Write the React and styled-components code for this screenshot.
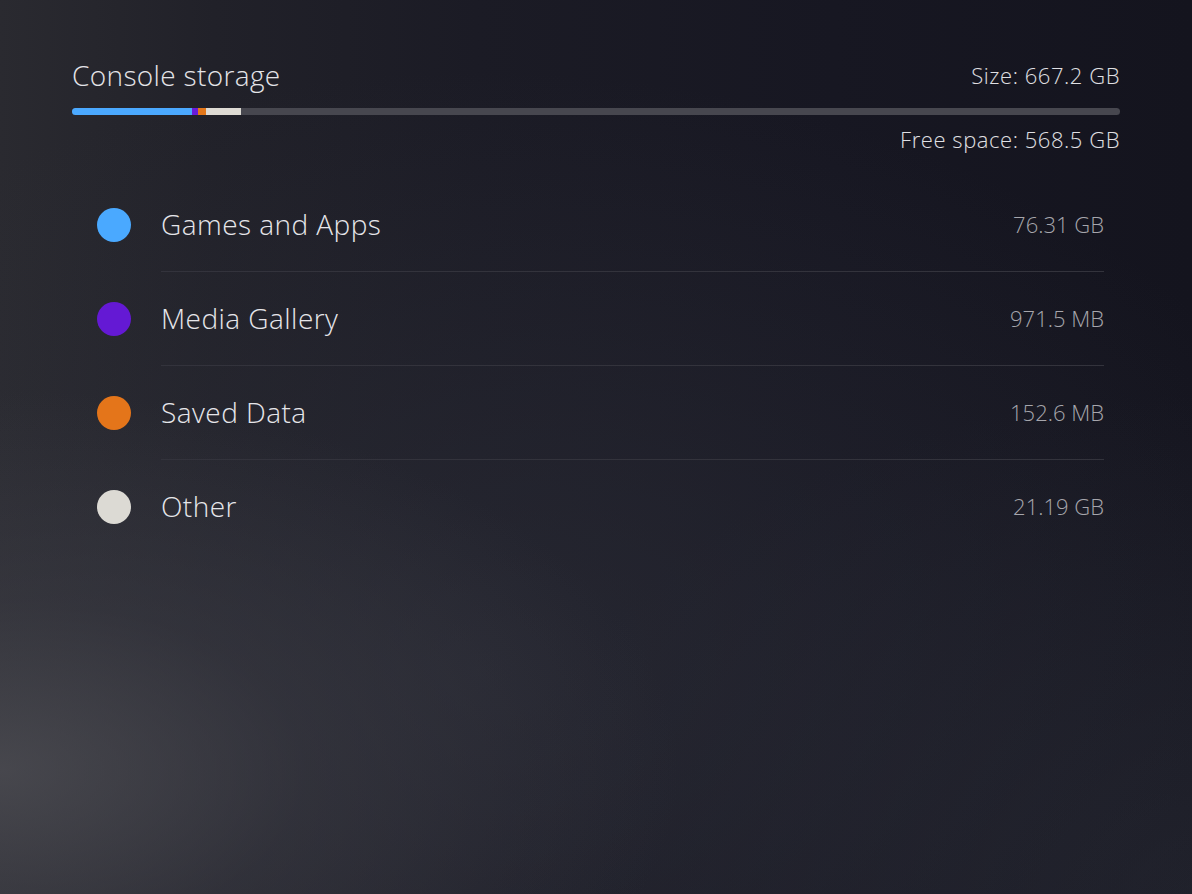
import React from "react";
import styled, { createGlobalStyle } from "styled-components";

const Global = createGlobalStyle`
  html, body { margin: 0; padding: 0; }
  body {
    width: 1192px;
    height: 894px;
    overflow: hidden;
    background: #181822;
    font-family: "Open Sans", "Noto Sans", sans-serif;
  }
`;

const Screen = styled.div`
  width: 1192px;
  height: 894px;
  box-sizing: border-box;
  padding: 51px 72px 0;
  background:
    radial-gradient(ellipse 680px 380px at 0px 770px, rgba(80, 80, 86, 0.75), rgba(70, 70, 78, 0.35) 45%, rgba(60, 60, 70, 0) 100%),
    radial-gradient(ellipse 900px 600px at 40% 75%, rgba(50, 52, 62, 0.5), rgba(40, 40, 50, 0) 100%),
    radial-gradient(ellipse 700px 500px at 100% 100%, rgba(38, 40, 50, 0.6), rgba(38, 40, 50, 0) 100%),
    linear-gradient(90deg, #2a2a30 0%, #212129 18%, #1b1b25 40%, #171722 70%, #14141e 100%);
`;

const Header = styled.div`
  display: flex;
  justify-content: space-between;
  align-items: center;
  height: 48px;
`;

const Title = styled.h1`
  margin: 0;
  font-size: 28px;
  font-weight: 300;
  color: #e4e4e8;
  line-height: 48px;
  letter-spacing: 0.35px;
`;

const Meta = styled.div`
  font-size: 22px;
  font-weight: 300;
  color: #e0e0e4;
  line-height: 30px;
  letter-spacing: 0.55px;
  text-align: right;
`;

const Bar = styled.div`
  margin-top: 9px;
  height: 7px;
  border-radius: 4px;
  background: #47474f;
  display: flex;
  overflow: hidden;
`;

const Segment = styled.div`
  height: 100%;
  background: ${(p) => p.$color};
`;

const Free = styled(Meta)`
  margin-top: 9px;
`;

const List = styled.div`
  margin: 24px 16px 0 25px;
  display: flex;
  flex-direction: column;
`;

const Row = styled.div`
  display: flex;
  align-items: center;
  height: 94px;
`;

const Dot = styled.span`
  width: 34px;
  height: 34px;
  border-radius: 50%;
  background: ${(p) => p.$color};
  flex: none;
  margin-right: 30px;
`;

const Body = styled.div`
  flex: 1;
  align-self: stretch;
  display: flex;
  align-items: center;
  justify-content: space-between;
  border-bottom: 1px solid ${(p) => (p.$last ? "transparent" : "#33333c")};
`;

const Label = styled.span`
  font-size: 28px;
  font-weight: 300;
  color: #e6e6ea;
  letter-spacing: 0.45px;
  margin-top: -2px;
`;

const Value = styled.span`
  font-size: 22px;
  font-weight: 300;
  color: #a6a6ac;
  margin-top: -2px;
`;

const segments = [
  { color: "#4ba9ff", w: 120 },
  { color: "#6a1bd8", w: 6 },
  { color: "#e3771a", w: 8 },
  { color: "#dedbd4", w: 35 },
];

const items = [
  { label: "Games and Apps", value: "76.31 GB", color: "#4aa9ff" },
  { label: "Media Gallery", value: "971.5 MB", color: "#6419d4" },
  { label: "Saved Data", value: "152.6 MB", color: "#e4751a" },
  { label: "Other", value: "21.19 GB", color: "#dcdad4" },
];

export default function App() {
  return (
    <Screen>
      <Global />
      <Header>
        <Title>Console storage</Title>
        <Meta>Size: 667.2 GB</Meta>
      </Header>
      <Bar>
        {segments.map((s, i) => (
          <Segment key={i} $color={s.color} style={{ width: s.w }} />
        ))}
      </Bar>
      <Free>Free space: 568.5 GB</Free>
      <List>
        {items.map((it, i) => (
          <Row key={it.label}>
            <Dot $color={it.color} />
            <Body $last={i === items.length - 1}>
              <Label>{it.label}</Label>
              <Value>{it.value}</Value>
            </Body>
          </Row>
        ))}
      </List>
    </Screen>
  );
}
